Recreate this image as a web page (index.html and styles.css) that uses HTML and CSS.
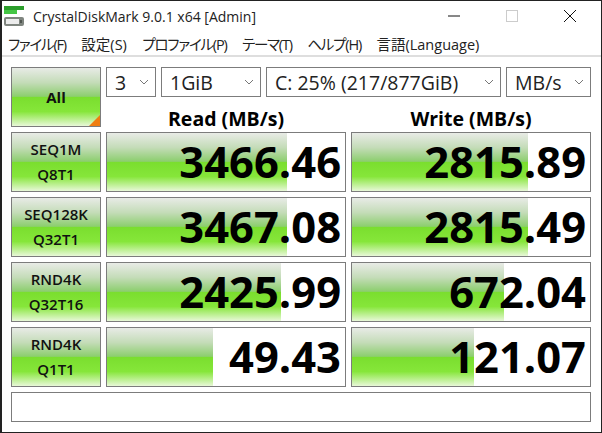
FILE: index.html
```html
<!DOCTYPE html>
<html lang="en">
<head>
    <meta charset="UTF-8">
    <meta name="viewport" content="width=device-width, initial-scale=1.0">
    <title>CrystalDiskMark</title>
    <link rel="stylesheet" href="styles.css">
</head>
<body>
    <div class="window">
        <!-- Title bar -->
        <div class="titlebar">
            <svg class="app-icon" width="21" height="22" viewBox="0 0 21 22">
                <rect x="0" y="1" width="20" height="4" fill="#2c9e2c"/>
                <rect x="0" y="5" width="13" height="4" fill="#45c645"/>
                <rect x="0" y="12" width="20" height="9" rx="2" fill="#7f857f"/>
                <rect x="2" y="14" width="13" height="5" fill="#ececec"/>
                <rect x="16" y="15" width="2" height="3" fill="#4f564f"/>
            </svg>
            <span class="title">CrystalDiskMark 9.0.1 x64 [Admin]</span>
            <div class="controls">
                <span class="control"><svg width="12" height="12" viewBox="0 0 12 12"><path d="M0 6h12" stroke="#111" fill="none"/></svg></span>
                <span class="control"><svg width="12" height="12" viewBox="0 0 12 12"><rect x="0.5" y="0.5" width="11" height="11" stroke="#ccc" fill="none"/></svg></span>
                <span class="control"><svg width="12" height="12" viewBox="0 0 12 12"><path d="M0 0l12 12M12 0L0 12" stroke="#111" fill="none"/></svg></span>
            </div>
        </div>

        <!-- Menu -->
        <div class="menu">
            <span class="kana">ファイル(F)</span>
            <span>設定(S)</span>
            <span class="kana">プロファイル(P)</span>
            <span class="kana">テーマ(T)</span>
            <span class="kana">ヘルプ(H)</span>
            <span>言語(Language)</span>
        </div>

        <!-- Main panel -->
        <div class="panel">
            <div class="grid">
                <div class="label all">All<span class="corner"></span></div>
                <div class="head-cell">
                    <div class="selects">
                        <div class="select sel-count">3<svg class="chev" width="10" height="6" viewBox="0 0 10 6"><path d="M1 1l4 4 4-4" stroke="#777" fill="none"/></svg></div>
                        <div class="select sel-size">1GiB<svg class="chev" width="10" height="6" viewBox="0 0 10 6"><path d="M1 1l4 4 4-4" stroke="#777" fill="none"/></svg></div>
                        <div class="select sel-drive">C: 25% (217/877GiB)<svg class="chev" width="10" height="6" viewBox="0 0 10 6"><path d="M1 1l4 4 4-4" stroke="#777" fill="none"/></svg></div>
                        <div class="select sel-unit">MB/s<svg class="chev" width="10" height="6" viewBox="0 0 10 6"><path d="M1 1l4 4 4-4" stroke="#777" fill="none"/></svg></div>
                    </div>
                    <div class="heads">
                        <div class="head">Read (MB/s)</div>
                        <div class="head">Write (MB/s)</div>
                    </div>
                </div>

                <div class="label">SEQ1M<br>Q8T1</div>
                <div class="result"><div class="bar" style="width: 180px"></div><span class="value">3466.46</span></div>
                <div class="result"><div class="bar" style="width: 176px"></div><span class="value">2815.89</span></div>

                <div class="label">SEQ128K<br>Q32T1</div>
                <div class="result"><div class="bar" style="width: 180px"></div><span class="value">3467.08</span></div>
                <div class="result"><div class="bar" style="width: 176px"></div><span class="value">2815.49</span></div>

                <div class="label">RND4K<br>Q32T16</div>
                <div class="result"><div class="bar" style="width: 174px"></div><span class="value">2425.99</span></div>
                <div class="result"><div class="bar" style="width: 152px"></div><span class="value">672.04</span></div>

                <div class="label">RND4K<br>Q1T1</div>
                <div class="result"><div class="bar" style="width: 106px"></div><span class="value">49.43</span></div>
                <div class="result"><div class="bar" style="width: 122px"></div><span class="value">121.07</span></div>
            </div>
            <div class="status"></div>
        </div>
    </div>
</body>
</html>
```

FILE: styles.css
```css
html, body {
    margin: 0;
    padding: 0;
}
body {
    width: 602px;
    height: 433px;
    overflow: hidden;
    background-color: #fff;
    font-family: "Open Sans", "Noto Sans CJK JP", sans-serif;
    color: #000;
}
.window {
    box-sizing: border-box;
    width: 602px;
    height: 433px;
    border: 1px solid #222;
    border-left-width: 2px;
    display: flex;
    flex-direction: column;
    background-color: #fff;
}
.titlebar {
    height: 30px;
    display: flex;
    align-items: center;
    flex-shrink: 0;
}
.app-icon {
    margin-left: 2px;
}
.title {
    margin-left: 8px;
    font-size: 14px;
    color: #222;
}
.controls {
    margin-left: auto;
    display: flex;
    margin-right: 2px;
}
.control {
    width: 58px;
    display: flex;
    justify-content: center;
}
.menu {
    height: 24px;
    display: flex;
    align-items: center;
    flex-shrink: 0;
    padding-left: 6px;
    gap: 15.5px;
    font-size: 14.5px;
    color: #222;
    border-bottom: 2px solid #dedede;
}
.kana {
    font-feature-settings: "palt";
    letter-spacing: -1.2px;
}
.panel {
    flex: 1;
    background-color: #fff;
    padding: 10px 9px 0 9px;
}
.grid {
    display: grid;
    grid-template-columns: 90px 240px 240px;
    grid-auto-rows: 60px;
    gap: 5px;
}
.label {
    box-sizing: border-box;
    border: 1px solid #7c7c7c;
    background: linear-gradient(to bottom, #e8ebe6 0%, #c4dcb8 25%, #8cce6e 49%, #7ade2e 50%, #86e63a 75%, #e8f8d8 100%);
    display: flex;
    align-items: center;
    justify-content: center;
    text-align: center;
    font-size: 15px;
    font-weight: 600;
    line-height: 25px;
    color: #111;
}
.all {
    position: relative;
    font-weight: 700;
}
.corner {
    position: absolute;
    right: 0;
    bottom: 0;
    border-style: solid;
    border-width: 0 0 11px 11px;
    border-color: transparent transparent #f07d10 transparent;
}
.head-cell {
    grid-column: span 2;
    display: flex;
    flex-direction: column;
}
.selects {
    display: flex;
    gap: 5px;
}
.select {
    box-sizing: border-box;
    height: 30px;
    border: 1px solid #7c7c7c;
    display: flex;
    align-items: center;
    justify-content: space-between;
    padding: 0 6px 0 8px;
    font-size: 19.5px;
    color: #222;
}
.sel-count { width: 50px; }
.sel-size { width: 100px; }
.sel-drive { width: 235px; }
.sel-unit { width: 85px; }
.heads {
    display: flex;
    gap: 5px;
}
.head {
    width: 240px;
    text-align: center;
    font-size: 19.5px;
    font-weight: 700;
    line-height: 44px;
}
.result {
    box-sizing: border-box;
    position: relative;
    border: 1px solid #7c7c7c;
    display: flex;
    align-items: center;
    justify-content: flex-end;
    padding-right: 4px;
}
.bar {
    position: absolute;
    left: 0;
    top: 0;
    bottom: 0;
    background: linear-gradient(to bottom, #e8ebe6 0%, #c4dcb8 25%, #8cce6e 49%, #7ade2e 50%, #86e63a 75%, #e8f8d8 100%);
}
.value {
    position: relative;
    font-size: 43.5px;
    font-weight: 700;
    line-height: 1;
}
.status {
    box-sizing: border-box;
    height: 30px;
    margin-top: 5px;
    width: 580px;
    border: 1px solid #7c7c7c;
}
```
